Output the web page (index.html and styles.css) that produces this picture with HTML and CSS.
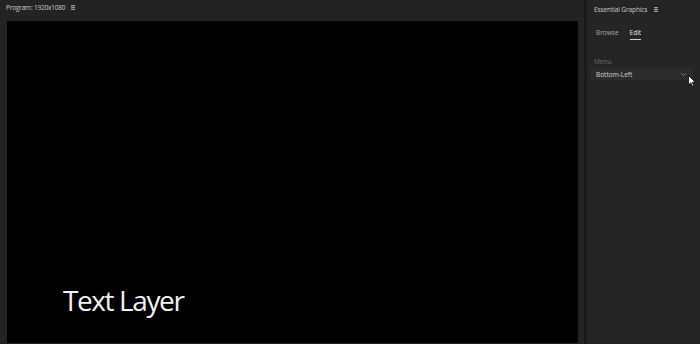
FILE: index.html
```html
<!DOCTYPE html>
<html lang="en">
<head>
    <meta charset="UTF-8">
    <title>Program Monitor</title>
    <link rel="stylesheet" href="styles.css">
</head>
<body>
    <div class="workspace">
        <!-- Program monitor -->
        <div class="monitor">
            <div class="panel-header">
                <span>Program: 1920x1080</span>
                <span class="menu-icon"></span>
            </div>
            <div class="screen">
                <div class="text-layer">Text Layer</div>
            </div>
        </div>

        <div class="divider"></div>

        <!-- Essential graphics -->
        <div class="graphics">
            <div class="panel-header graphics-header">
                <span>Essential Graphics</span>
                <span class="menu-icon"></span>
            </div>
            <div class="tabs">
                <span class="tab">Browse</span>
                <span class="tab active">Edit</span>
            </div>
            <div class="field">
                <div class="field-label">Menu</div>
                <div class="dropdown">
                    <span>Bottom-Left</span>
                    <svg class="chevron" width="7" height="5" viewBox="0 0 7 5">
                        <path d="M1 1 L3.5 3.5 L6 1" fill="none" stroke="#777" stroke-width="1"/>
                    </svg>
                    <svg class="cursor" width="8" height="12" viewBox="0 0 8 12">
                        <path d="M0.5 0.5 L0.5 10 L2.8 7.8 L4.4 11.3 L5.8 10.7 L4.3 7.3 L7.3 7.3 Z" fill="#fff" stroke="#000" stroke-width="0.8"/>
                    </svg>
                </div>
            </div>
        </div>
    </div>
</body>
</html>
```

FILE: styles.css
```css
html, body {
    margin: 0;
    padding: 0;
    height: 100%;
    background-color: #1d1d1d;
    font-family: "Open Sans", "Noto Sans", sans-serif;
    overflow: hidden;
}
.workspace {
    display: flex;
    height: 344px;
}
.monitor {
    width: 584px;
    background-color: #232323;
    display: flex;
    flex-direction: column;
    padding: 0 6px 1px 7px;
    box-sizing: border-box;
}
.panel-header {
    height: 21px;
    display: flex;
    align-items: center;
    gap: 6px;
    font-size: 6.5px;
    letter-spacing: -0.2px;
    color: #c8c8c8;
    padding-bottom: 7px;
    box-sizing: border-box;
    margin-left: -1px;
}
.menu-icon {
    width: 4px;
    height: 5px;
    background: repeating-linear-gradient(#9a9a9a 0 1px, #4a4a4a 1px 2px);
}
.screen {
    flex: 1;
    background-color: #000;
    position: relative;
}
.text-layer {
    position: absolute;
    left: 56px;
    top: 260px;
    font-size: 28px;
    color: #f2f2f2;
    letter-spacing: -1.4px;
    font-family: "Open Sans", sans-serif;
}
.divider {
    width: 3px;
    background-color: #1a1a1a;
}
.graphics {
    flex: 1;
    background-color: #252525;
    padding: 0 7px 0 4px;
}
.graphics-header {
    padding-left: 4px;
    padding-bottom: 0;
    height: 19px;
    letter-spacing: -0.1px;
    gap: 7px;
}
.tabs {
    display: flex;
    gap: 11px;
    padding: 9px 0 0 5px;
    font-size: 6.5px;
}
.tab {
    color: #a8a8a8;
    padding-bottom: 2px;
}
.tab.active {
    color: #e6e6e6;
    border-bottom: 1px solid #d0d0d0;
}
.field {
    margin-top: 17px;
}
.field-label {
    font-size: 6.5px;
    color: #6c6c6c;
    padding-left: 3px;
    margin-bottom: 2px;
}
.dropdown {
    position: relative;
    height: 12px;
    background-color: #2c2c2c;
    display: flex;
    align-items: center;
    padding-left: 5px;
    font-size: 6.5px;
    color: #d4d4d4;
}
.chevron {
    position: absolute;
    right: 6px;
    top: 4px;
}
.cursor {
    position: absolute;
    left: 97px;
    top: 7px;
}
```
